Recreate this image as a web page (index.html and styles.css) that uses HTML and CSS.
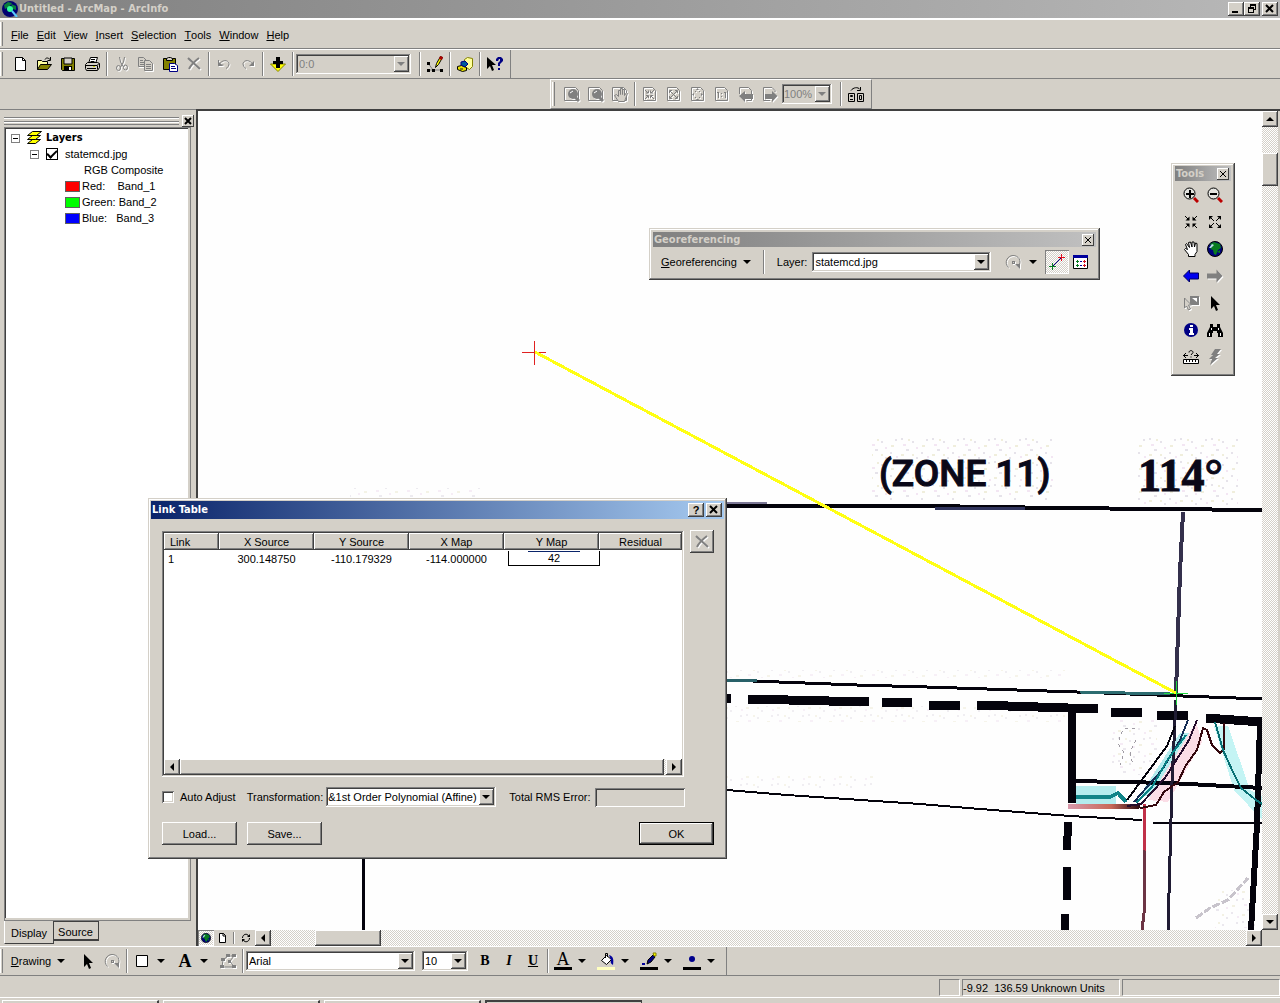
FILE: index.html
```html
<!DOCTYPE html>
<html lang="en">
<head>
  <meta charset="UTF-8" />
  <meta name="viewport" content="width=device-width, initial-scale=1.0"/>
  <title>Untitled - ArcMap - ArcInfo</title>
  <link rel="stylesheet" href="styles.css">
</head>
<body>

  <!-- icon set, 16x16 each -->
  <svg class="icon-defs" aria-hidden="true">
    <symbol id="i-new" viewBox="0 0 16 16"><path d="M3.5 1.5h7l3 3v10h-10z" fill="#fff" stroke="#000"/><path d="M10.500 1.500v3h3" fill="none" stroke="#000"/></symbol>
    <symbol id="i-open" viewBox="0 0 16 16"><path d="M1.500 13.500v-9h4l1 1h5v3" fill="#ffff9c" stroke="#000"/><path d="M1.500 13.500l3-5h11l-4 5z" fill="#848200" stroke="#000"/><path d="M9 3.500c1-2 3-2 5 0M14.500 1v3.500h-3" fill="none" stroke="#000"/></symbol>
    <symbol id="i-save" viewBox="0 0 16 16"><path d="M1.500 2.500h13v12h-12l-1-1z" fill="#848200" stroke="#000"/><path d="M4 2h8v6H4z" fill="#d4d0c8" stroke="#000"/><path d="M4 10h8v4H4z"/><path d="M9 11h2v3H9z" fill="#fff"/></symbol>
    <symbol id="i-print" viewBox="0 0 16 16"><path d="M4.500 7.500l2-6h7l-2 6z" fill="#fff" stroke="#000"/><path d="M7 3.500h4M6.500 5.500h4" stroke="#000"/><path d="M1.500 8.500l2-2h10l2 1v4l-2 3h-11l-1-2z" fill="#d4d0c8" stroke="#000"/><path d="M2 9.500h11l2-2M13.500 9.500v4M3 12.500h9" stroke="#000" fill="none"/><path d="M9 10h2v1H9z" fill="#cc0"/></symbol>
    <symbol id="i-cut" viewBox="0 0 16 16"><g fill="none" stroke="currentColor"><path d="M5.500 1l1 5 3 5M10.500 1l-1 5-3 5"/><ellipse cx="4.500" cy="12" rx="2" ry="2.500"/><ellipse cx="11.500" cy="11.500" rx="2" ry="2.500"/></g></symbol>
    <symbol id="i-copy" viewBox="0 0 16 16"><g fill="#d4d0c8" stroke="currentColor"><path d="M.5 1.500h5l3 3v6h-8z"/><path d="M2 4.500h3M2 6.500h5M2 8.500h5"/><path d="M6.500 4.500h5l3 3v7h-8z"/><path d="M8 8.500h5M8 10.500h5M8 12.500h5"/></g></symbol>
    <symbol id="i-paste" viewBox="0 0 16 16"><path d="M1.500 2.500h12v11h-12z" fill="#848200" stroke="#000"/><path d="M4.500 4.500v-2l2-1h2l2 1v2z" fill="#d4d0c8" stroke="#000"/><path d="M7.500 7.500h5l3 2v6h-8z" fill="#fff" stroke="#000084"/><path d="M9 10.500h4M9 12.500h5" stroke="#000084"/></symbol>
    <symbol id="i-x" viewBox="0 0 16 16"><path d="M2 2c3 3 8 7 12 11M13 2C9 5 5 9 3 13" fill="none" stroke="currentColor" stroke-width="2"/></symbol>
    <symbol id="i-undo" viewBox="0 0 16 16"><path d="M3 8.500c3-5 9-5 10-1 0 2-1 4-3 5M2.500 4v5h5" fill="none" stroke="currentColor"/><path d="M2 5v5h5z" fill="currentColor"/></symbol>
    <symbol id="i-redo" viewBox="0 0 16 16"><path d="M13 8.500c-3-5-9-5-10-1 0 2 1 4 3 5" fill="none" stroke="currentColor"/><path d="M14 5v5H9z" fill="currentColor"/></symbol>
    <symbol id="i-add" viewBox="0 0 16 16"><path d="M.5 8h15L8 15.500z" fill="#ff0" stroke="#848200"/><path d="M6 1h4v4h3v3h-3v4H6V8H3V5h3z"/></symbol>
    <symbol id="i-editor" viewBox="0 0 16 16"><path d="M1 7l5 7h9M2 14h5" fill="none" stroke="#808080"/><path d="M0 6h3v3H0zM0 13h3v3H0zM5 13h3v3H5zM13 13h3v3h-3z"/><path d="M8.500 11.500l1-4 4-7 2 1-4 7z" fill="#ff0" stroke="#000"/><path d="M13 0l3 1-1 3-3-1z" fill="#a00"/></symbol>
    <symbol id="i-toolbox" viewBox="0 0 16 16"><path d="M7.500 3.500l3-2 5 1v8l-3 3-5-3z" fill="#ffff9c" stroke="#848200"/><path d="M.5 10.500l4-1 5 2v3l-4 1-5-2z" fill="#e8e000" stroke="#000"/><path d="M4 6l4-1 3 3-3 3-4-2z" fill="#005a9c" stroke="#000084"/><path d="M3 12h3v2H3z" fill="#848200"/></symbol>
    <symbol id="i-help" viewBox="0 0 16 16"><path d="M0 1v12l3-3 2 5 2-1-2-5h4z"/><path d="M9 5V3l2-2h3l2 2v2l-3 3v2h-2V7l2-2V3h-1l-1 2zM11 12h2v2h-2z" fill="#000084"/></symbol>
    <symbol id="i-pzoom" viewBox="0 0 16 16"><path d="M.5 1.500h11l3 3v10H.5z" fill="none" stroke="currentColor"/><circle cx="9" cy="8" r="5" fill="currentColor"/><path d="M11 11l4 4" stroke="currentColor" stroke-width="3"/><path d="M6 7l3-2" stroke="#fff"/></symbol>
    <symbol id="i-phand" viewBox="0 0 16 16"><path d="M.5 1.500h11l3 3v10H.5z" fill="none" stroke="currentColor"/><path d="M6.500 15.500l-4-6 2-1 2 2v-6h2v4-6h2v6-5h2v6l2-3 1 1-3 8z" fill="#d4d0c8" stroke="currentColor"/></symbol>
    <symbol id="i-pin" viewBox="0 0 16 16"><g fill="none" stroke="currentColor"><path d="M1.500 1.500h9l3 3v10h-12z"/><path d="M3 4l3 3M4 7h2.500V4.500M12 4L9 7M11 7H8.500V4.500M3 13l3-3M4 9.500h2.500V12M12 13l-3-3M11 9.500H8.500V12"/></g></symbol>
    <symbol id="i-pout" viewBox="0 0 16 16"><g fill="none" stroke="currentColor"><path d="M1.500 1.500h9l3 3v10h-12z"/><path d="M3.500 7V4.500H6M4 5l7 7M11.500 7V4.500H9M11 5l-7 7M3.500 10v2.500H6M11.500 10v2.500H9"/></g></symbol>
    <symbol id="i-pfull" viewBox="0 0 16 16"><g fill="none" stroke="currentColor"><path d="M1.500 1.500h9l3 3v10h-12z"/><path d="M5 5.500h1M9 5.500h1M5 11.500h1M9 11.500h1"/></g><path d="M6 4l1.500-2L9 4zM6 13l1.500 2L9 13zM4 7L2 8.500 4 10zM11 7l2 1.500-2 1.500z" fill="currentColor"/></symbol>
    <symbol id="i-p11" viewBox="0 0 16 16"><path d="M1.500 1.500h9l3 3v10h-12z" fill="none" stroke="currentColor"/><path d="M3 6h2v6H4V7H3zM10 6h2v6h-1V7h-1zM7 7h1v1H7zM7 10h1v1H7z" fill="currentColor"/></symbol>
    <symbol id="i-pback" viewBox="0 0 16 16"><path d="M1.500 8V1.500h9l3 3v10h-5" fill="none" stroke="currentColor"/><path d="M1 10l6-5v3h8v5H7v3z" fill="currentColor"/></symbol>
    <symbol id="i-pnext" viewBox="0 0 16 16"><path d="M13 6V4.500l-3-3H1.500v13H8" fill="none" stroke="currentColor"/><path d="M15.500 10L10 5v3H3v5h7v3z" fill="currentColor"/></symbol>
    <symbol id="i-toggle" viewBox="0 0 16 16"><g fill="none" stroke="#000"><path d="M.5 7.500h6v8h-6zM9.500 7.500h6v8h-6zM2.500 9.500h2v1h-2zM2 13.500h3M11.500 9.500h2v4h-2z"/><path d="M3 4.500c2-3 7-4 9-1M12.500 1v3.500H9"/></g></symbol>
    <symbol id="i-layers" viewBox="0 0 16 16"><g fill="#ff0" stroke="#000"><path d="M1.500 13.500l5-4h8l-5 4z"/><path d="M1.500 9.500l5-4h8l-5 4z"/><path d="M1.500 5.500l5-4h9l-5 4z"/></g></symbol>
    <symbol id="i-zin" viewBox="0 0 16 16"><path d="M11 11l4 4" stroke="#b00" stroke-width="3"/><circle cx="6.500" cy="6.500" r="5.500" fill="#e4e4e0" stroke="#000"/><path d="M6 3h2v3h3v2H8v3H6V8H3V6h3z"/></symbol>
    <symbol id="i-zout" viewBox="0 0 16 16"><path d="M11 11l4 4" stroke="#b00" stroke-width="3"/><circle cx="6.500" cy="6.500" r="5.500" fill="#e4e4e0" stroke="#000"/><path d="M3 6h7v2H3z"/></symbol>
    <symbol id="i-fin" viewBox="0 0 16 16"><path d="M2 2l4 4M14 2l-4 4M2 14l4-4M14 14l-4-4" stroke="#000"/><path d="M6.500 2.500v4h-4zM9.500 2.500v4h4zM6.500 13.500v-4h-4zM9.500 13.500v-4h4z"/></symbol>
    <symbol id="i-fout" viewBox="0 0 16 16"><path d="M3 3l4 4M13 3L9 7M3 13l4-4M13 13L9 9" stroke="#000"/><path d="M2 2h4L2 6zM14 2h-4l4 4zM2 14h4l-4-4zM14 14h-4l4-4z"/></symbol>
    <symbol id="i-hand" viewBox="0 0 16 16"><path d="M5.500 15.500v-2l-4-5 1-1 2 1-2-5 1-1 3 4-1-5 2-.5 1.500 5v-5h2l.5 5 1-4 1.500.5v8l-2 3v2z" fill="#fff" stroke="#000"/></symbol>
    <symbol id="i-globe" viewBox="0 0 16 16"><circle cx="8" cy="8" r="7.500" fill="#00007c" stroke="#000"/><path d="M3 3l4-2 6 2 1 4-3 2-2 5-2-1-1-4-3-1 2-2z" fill="#087c20"/><path d="M2 7l3-4 2 1-3 3z" fill="#b8e0e8"/><path d="M10 11l3-2v3z" fill="#087c20"/></symbol>
    <symbol id="i-back" viewBox="0 0 16 16"><path d="M.5 8l6-6v3h9v6h-9v3z" fill="#00e" stroke="#000060"/></symbol>
    <symbol id="i-next" viewBox="0 0 16 16"><path d="M15.500 8l-6-6.500v4H0v5h9.500v4z" fill="currentColor"/></symbol>
    <symbol id="i-selfeat" viewBox="0 0 16 16"><path d="M7 1h9v9H7z" fill="currentColor"/><path d="M9 3h5v4z" fill="#fff"/><path d="M1.500 3v10l2-2 2 4 2-1-2-4h3z" fill="#d4d0c8" stroke="currentColor"/></symbol>
    <symbol id="i-arrow" viewBox="0 0 16 16"><path d="M4 1v13l3-3 2 5 2-1-2-5h4z"/></symbol>
    <symbol id="i-info" viewBox="0 0 16 16"><circle cx="8" cy="8" r="7" fill="#000084"/><path d="M7 3h3v2H7zM6 6h4v5h1v2H6v-2h1V8H6z" fill="#fff"/></symbol>
    <symbol id="i-find" viewBox="0 0 16 16"><path d="M3 2h3v3h4V2h3v3l3 6v4h-5v-4h-1V9H6v2H5v4H0v-4l3-6z"/><path d="M2 11h1v3H2zM13 11h1v3h-1zM4 6h1v2H4zM11 6h1v2h-1z" fill="#fff"/></symbol>
    <symbol id="i-measure" viewBox="0 0 16 16"><path d="M.5 10.500h15v4H.5z" fill="#fff" stroke="#000"/><path d="M3.500 11v2M6.500 11v2M9.500 11v2M12.500 11v2M0 6.500h5M11 6.500h5M3 4L.5 6.500 3 9M13 4l2.500 2.500L13 9M6 3.500C6 1 10 1 10 3.500L8 6M8 7.500v1" fill="none" stroke="#000"/></symbol>
    <symbol id="i-bolt" viewBox="0 0 16 16"><path d="M8 0h6l-4 5h3l-5 4h3L3 16l2-6H2l4-4H4z" fill="currentColor"/></symbol>
    <symbol id="i-rotate" viewBox="0 0 16 16"><path d="M3.500 13.500c-5-5-1-12 4.500-12s9 5 5.500 11" fill="none" stroke="currentColor"/><path d="M10 10h5v5zM7 7h3v3H7z" fill="currentColor"/><path d="M8 8h1v1H8z" fill="#d4d0c8"/></symbol>
    <symbol id="i-link" viewBox="0 0 16 16"><path d="M4 12l8-8" stroke="#000084"/><path d="M12 0h1v3h3v1h-3v3h-1V4H9V3h3z" fill="#e01020"/><path d="M3 9h1v3h3v1H4v3H3v-3H0v-1h3z" fill="#087c20"/></symbol>
    <symbol id="i-table" viewBox="0 0 16 16"><path d="M.5 2.500h14v12H.5z" fill="#fff" stroke="#000"/><path d="M0 1h15v3H0z" fill="#00009c"/><path d="M4.500 6v3M3 7.500h3M4.500 10v3M3 11.500h3" stroke="#087c20"/><path d="M11.500 6v3M10 7.500h3M11.500 10v3M10 11.500h3" stroke="#d01020"/><path d="M7 7.500h2M7 11.500h2" stroke="#00009c"/></symbol>
    <symbol id="i-rect" viewBox="0 0 16 16"><path d="M2.500 2.500h11v11h-11z" fill="#fff" stroke="#000"/></symbol>
    <symbol id="i-vertex" viewBox="0 0 16 16"><path d="M2 14l1-7 5-4h6l-4 5 4 6z" fill="none" stroke="currentColor"/><path d="M0 12h4v3H0zM1 5h4v3H1zM6 1h4v3H6zM12 1h4v3h-4zM8 7h3v3H8zM12 12h4v3h-4z" fill="currentColor"/></symbol>
    <symbol id="i-fill" viewBox="0 0 16 16"><path d="M3.500 8.500l5-5 5 4-5 5z" fill="#fff" stroke="#000"/><path d="M7.500 6V1.500h2V5" fill="none" stroke="#000"/><path d="M11 3c4 1 5 4 4 10-2-1-3-3-2-5z" fill="#00009c"/></symbol>
    <symbol id="i-pen" viewBox="0 0 16 16"><path d="M6 12l1-4 5-5 2 2-4 5z" fill="#000084" stroke="#000"/><path d="M12 1h3v3h-2z" fill="#ff0" stroke="#848200"/><path d="M1 11h3v2H1z" fill="#00009c"/></symbol>
    <symbol id="i-dot" viewBox="0 0 16 16"><circle cx="8" cy="7" r="3" fill="#00008c"/></symbol>
    <symbol id="i-page" viewBox="0 0 16 16"><path d="M5.500 3.500h4l2 2v7h-6z" fill="#fff" stroke="#000"/><path d="M9 3v3h3" fill="none" stroke="#000"/></symbol>
    <symbol id="i-refresh" viewBox="0 0 16 16"><path d="M4.500 8c0-4 5-5 6-2M11.500 8c0 4-5 5-6 2" fill="none" stroke="#000"/><path d="M12 4v3H9zM4 12V9h3z"/></symbol>
    <symbol id="i-app" viewBox="0 0 16 16"><circle cx="8" cy="8" r="8" fill="#000070"/><path d="M2 4l4-3 4 1-3 4-4 2zM9 3l5 2v4l-3-1z" fill="#0a7c3c"/><circle cx="8" cy="8" r="3" fill="#30ff98"/><path d="M10 10l5 6" stroke="#5ac8ff" stroke-width="2"/></symbol>
  </svg>

  <header class="title-bar">
    <svg class="icon"><use href="#i-app"/></svg>
    <h1>Untitled - ArcMap - ArcInfo</h1>
    <div class="window-buttons">
      <button type="button" aria-label="Minimize"><svg viewBox="0 0 12 10"><path d="M2 7h6v2H2z"/></svg></button>
      <button type="button" aria-label="Restore"><svg viewBox="0 0 12 10"><path d="M4 0h6v6H8V5h1V2H5v1H4zM2 3h6v6H2zM3 5v3h4V5z" fill-rule="evenodd"/></svg></button>
      <button type="button" class="close" aria-label="Close"><svg viewBox="0 0 12 10"><path d="M2 1l7 7M9 1L2 8" stroke="#000" stroke-width="2"/></svg></button>
    </div>
  </header>

  <nav class="menu-bar">
    <span class="grip"></span>
    <button type="button"><u>F</u>ile</button>
    <button type="button"><u>E</u>dit</button>
    <button type="button"><u>V</u>iew</button>
    <button type="button"><u>I</u>nsert</button>
    <button type="button"><u>S</u>election</button>
    <button type="button"><u>T</u>ools</button>
    <button type="button"><u>W</u>indow</button>
    <button type="button"><u>H</u>elp</button>
  </nav>

  <div class="dock-row">
    <div class="toolbar">
      <span class="grip"></span>
      <button type="button" aria-label="New"><svg class="icon"><use href="#i-new"/></svg></button>
      <button type="button" aria-label="Open"><svg class="icon"><use href="#i-open"/></svg></button>
      <button type="button" aria-label="Save"><svg class="icon"><use href="#i-save"/></svg></button>
      <button type="button" aria-label="Print"><svg class="icon"><use href="#i-print"/></svg></button>
      <span class="sep"></span>
      <button type="button" disabled aria-label="Cut"><svg class="icon"><use href="#i-cut"/></svg></button>
      <button type="button" disabled aria-label="Copy"><svg class="icon"><use href="#i-copy"/></svg></button>
      <button type="button" aria-label="Paste"><svg class="icon"><use href="#i-paste"/></svg></button>
      <button type="button" disabled aria-label="Delete"><svg class="icon"><use href="#i-x"/></svg></button>
      <span class="sep"></span>
      <button type="button" disabled aria-label="Undo"><svg class="icon"><use href="#i-undo"/></svg></button>
      <button type="button" disabled aria-label="Redo"><svg class="icon"><use href="#i-redo"/></svg></button>
      <span class="sep"></span>
      <button type="button" aria-label="Add data"><svg class="icon"><use href="#i-add"/></svg></button>
      <span class="sep"></span>
      <span class="combo combo-scale off"><select disabled aria-label="Map scale"><option>0:0</option></select></span>
      <span class="sep"></span>
      <button type="button" aria-label="Editor toolbar"><svg class="icon"><use href="#i-editor"/></svg></button>
      <span class="sep"></span>
      <button type="button" aria-label="Toolbox"><svg class="icon"><use href="#i-toolbox"/></svg></button>
      <span class="sep"></span>
      <button type="button" aria-label="What's this?"><svg class="icon"><use href="#i-help"/></svg></button>
    </div>
  </div>

  <div class="dock-row layout-row">
    <div class="toolbar">
      <span class="grip"></span>
      <button type="button" disabled aria-label="Zoom in page"><svg class="icon"><use href="#i-pzoom"/></svg></button>
      <button type="button" disabled aria-label="Zoom out page"><svg class="icon"><use href="#i-pzoom"/></svg></button>
      <button type="button" disabled aria-label="Pan page"><svg class="icon"><use href="#i-phand"/></svg></button>
      <span class="sep"></span>
      <button type="button" disabled aria-label="Fixed zoom in page"><svg class="icon"><use href="#i-pin"/></svg></button>
      <button type="button" disabled aria-label="Fixed zoom out page"><svg class="icon"><use href="#i-pout"/></svg></button>
      <button type="button" disabled aria-label="Whole page"><svg class="icon"><use href="#i-pfull"/></svg></button>
      <button type="button" disabled aria-label="Zoom to 100%"><svg class="icon"><use href="#i-p11"/></svg></button>
      <button type="button" disabled aria-label="Previous extent"><svg class="icon"><use href="#i-pback"/></svg></button>
      <button type="button" disabled aria-label="Next extent"><svg class="icon"><use href="#i-pnext"/></svg></button>
      <span class="combo combo-zoom off"><select disabled aria-label="Page zoom"><option>100%</option></select></span>
      <span class="sep"></span>
      <button type="button" aria-label="Toggle draft mode"><svg class="icon"><use href="#i-toggle"/></svg></button>
    </div>
  </div>

  <main class="workspace">
    <aside class="contents">
      <div class="contents-grip">
        <span class="lines"></span>
        <button type="button" class="close-small" aria-label="Close table of contents"><svg viewBox="0 0 8 8"><path d="M1 1l6 6M7 1L1 7" stroke="#000" stroke-width="2"/></svg></button>
      </div>
      <ul class="tree">
        <li class="level-1"><span class="expander"></span><svg class="icon"><use href="#i-layers"/></svg><b>Layers</b></li>
        <li class="level-2"><span class="expander"></span><input type="checkbox" id="layer" checked><label for="layer">statemcd.jpg</label></li>
        <li class="level-4">RGB Composite</li>
        <li class="level-3"><span class="swatch red"></span>Red:    Band_1</li>
        <li class="level-3"><span class="swatch green"></span>Green: Band_2</li>
        <li class="level-3"><span class="swatch blue"></span>Blue:   Band_3</li>
      </ul>
      <div class="tabs">
        <button type="button" class="active">Display</button>
        <button type="button">Source</button>
      </div>
    </aside>

    <section class="map-pane">
      <svg class="map" viewBox="198 111 1064 819" preserveAspectRatio="xMinYMin slice" role="img" aria-label="Scanned state map">
        <defs>
          <pattern id="speckle" width="31" height="23" patternUnits="userSpaceOnUse">
            <path d="M2 1h2v2H2zM13 4h2v2h-2zM7 12h3v2H7zM22 15h2v2h-2zM27 2h2v2h-2zM17 20h2v2h-2z" fill="#e6e3ea"/>
            <path d="M9 2h2v2H9zM23 8h3v2h-3zM2 17h3v2H2zM13 17h2v2h-2z" fill="#f0eedc"/>
            <path d="M4 7h3v2H4zM17 10h2v2h-2zM28 19h2v2h-2z" fill="#f3e6f3"/>
          </pattern>
          <linearGradient id="red-road" gradientUnits="userSpaceOnUse" x1="1068" y1="0" x2="1140" y2="0"><stop offset="0" stop-color="#d89aac"/><stop offset=".6" stop-color="#c86858"/><stop offset="1" stop-color="#280810"/></linearGradient>
        </defs>
        <g fill="url(#speckle)">
          <path d="M872 436h182v64H872zM1136 436h102v70h-102z"/>
          <path d="M727 670h340v8H727zM727 706h340v16H727zM727 776h150v12H727z" opacity=".6"/>
          <path d="M1112 720h45v55h-45zM1215 890h40v38h-40z" opacity=".8"/>
          <path d="M350 488h130v10H350z" opacity=".7"/>
        </g>
        <path d="M1214 726l14 0 22 64 12 6v24l-28-30z" fill="#c4f4f4"/>
        <path d="M1076 786h40v18h-40zM1140 795l40-62 12 0-34 66z" fill="#b4ecee"/>
        <path d="M1196 722l-48 78 20 2 34-60z" fill="#fbdde6"/>
        <text class="zone" x="879" y="486">(ZONE 11)</text>
        <text class="degree" x="1138" y="491">114°</text>

        <g class="ink" fill="none" stroke="#04030c">
          <path d="M727 503.500h40" stroke="#7c7896" stroke-width="3"/>
          <path d="M727 506h200l130 2 205 2" stroke-width="4"/>
          <path d="M935 508h90" stroke="#30345c" stroke-width="3"/>
          <path d="M1183 512l-3 60-3 90-1 31" stroke="#34304c" stroke-width="4"/>
          <path d="M727 680l130 5 70 2 150 5 185 7" stroke-width="3"/>
          <path d="M727 680h30" stroke="#286068" stroke-width="3"/>
          <path d="M1080 692l90 2" stroke="#2c6c70" stroke-width="3"/>
          <path d="M727 698h4M748 699l121 3M882 702h30M929 705h31M977 705l121 4M1111 712h31M1157 715h31M1206 718l56 4" stroke-width="9"/>
          <path d="M1072 708v95" stroke-width="8"/>
          <path d="M1068 822l-1 28M1067 867v33M1065 914v16" stroke-width="8"/>
          <path d="M363.500 855v75" stroke-width="3"/>
          <path d="M1072 781l98 2 92 5" stroke-width="4"/>
          <path d="M1076 797h34l8-4 8 9" stroke="#108488" stroke-width="4"/>
          <path d="M1068 807l72-1" stroke="url(#red-road)" stroke-width="5"/>
          <path d="M727 790l60 5 133 9 60 5 90 7 72 4M1153 823h109" stroke-width="2"/>
          <path d="M1176 700l-4 82-4 148" stroke="#201c34" stroke-width="3"/>
          <path d="M1144 804v20l1 30" stroke="#c03048" stroke-width="3"/>
          <path d="M1144 850l1 55-3 25" stroke="#6c3444" stroke-width="3"/>
          <path d="M1260 724l-3 100-6 106" stroke-width="6"/>
          <path d="M1175 726l-8 20-40 54" stroke-width="2"/>
          <path d="M1188 720l-8 20-18 30-28 32" stroke="#142c54" stroke-width="2"/>
          <path d="M1186 735l-18 24-16 28-16 16" stroke="#088084" stroke-width="2"/>
          <path d="M1197 720l-8 20-24 38-24 26-14 2" stroke="#240c2c" stroke-width="2"/>
          <path d="M1140 808l16-3 8-13 14-10 8-17 11-15 6-22 4 2 5 15 8 8 4-4v-26" stroke="#34080e" stroke-width="2"/>
          <path d="M1215 722l8 28 10 22 8 16 15 12 6 4" stroke="#087074" stroke-width="2"/>
          <path d="M1135 728l-12 1-5 14 6 10-4 12M1136 740l-6 12 3 13" stroke="#a09ca4" stroke-dasharray="3 4"/>
          <path d="M1196 918l14-10 18-8 20-22" stroke="#c8c4cc" stroke-width="3" stroke-dasharray="8 2"/>
        </g>
        <!-- control point link -->
        <path d="M1164 693h24M1176 681v24" stroke="#20d840"/>
        <path d="M522 352.500h24M534.500 341v24" stroke="#e02020"/>
        <path d="M535 352l641 341" stroke="#ffff14" stroke-width="3"/>
      </svg>

      <div class="scroll vertical">
        <button type="button" aria-label="Scroll up"><i class="tri up"></i></button>
        <span class="thumb"></span>
        <button type="button" aria-label="Scroll down"><i class="tri down"></i></button>
      </div>

      <div class="scroll horizontal">
        <div class="view-buttons">
          <button type="button" class="pressed" aria-label="Data view"><svg class="icon-mini"><use href="#i-globe"/></svg></button>
          <button type="button" aria-label="Layout view"><svg class="icon"><use href="#i-page"/></svg></button>
          <span class="sep"></span>
          <button type="button" aria-label="Refresh view"><svg class="icon"><use href="#i-refresh"/></svg></button>
        </div>
        <button type="button" aria-label="Scroll left"><i class="tri left"></i></button>
        <span class="thumb"></span>
        <button type="button" aria-label="Scroll right"><i class="tri right"></i></button>
      </div>
    </section>

    <section class="window tools-window">
      <div class="caption">
        <h2>Tools</h2>
        <button type="button" class="close-small" aria-label="Close tools"><svg viewBox="0 0 8 8"><path d="M1 1l6 6M7 1L1 7" stroke="#000"/></svg></button>
      </div>
      <div class="tool-grid">
        <button type="button" aria-label="Zoom in"><svg class="icon"><use href="#i-zin"/></svg></button>
        <button type="button" aria-label="Zoom out"><svg class="icon"><use href="#i-zout"/></svg></button>
        <button type="button" aria-label="Fixed zoom in"><svg class="icon"><use href="#i-fin"/></svg></button>
        <button type="button" aria-label="Fixed zoom out"><svg class="icon"><use href="#i-fout"/></svg></button>
        <button type="button" aria-label="Pan"><svg class="icon"><use href="#i-hand"/></svg></button>
        <button type="button" aria-label="Full extent"><svg class="icon"><use href="#i-globe"/></svg></button>
        <button type="button" aria-label="Back"><svg class="icon"><use href="#i-back"/></svg></button>
        <button type="button" disabled aria-label="Forward"><svg class="icon"><use href="#i-next"/></svg></button>
        <button type="button" disabled aria-label="Select features"><svg class="icon"><use href="#i-selfeat"/></svg></button>
        <button type="button" aria-label="Select elements"><svg class="icon"><use href="#i-arrow"/></svg></button>
        <button type="button" aria-label="Identify"><svg class="icon"><use href="#i-info"/></svg></button>
        <button type="button" aria-label="Find"><svg class="icon"><use href="#i-find"/></svg></button>
        <button type="button" aria-label="Measure"><svg class="icon"><use href="#i-measure"/></svg></button>
        <button type="button" disabled aria-label="Hyperlink"><svg class="icon"><use href="#i-bolt"/></svg></button>
      </div>
    </section>

    <section class="window georef-window">
      <div class="caption">
        <h2>Georeferencing</h2>
        <button type="button" class="close-small" aria-label="Close georeferencing"><svg viewBox="0 0 8 8"><path d="M1 1l6 6M7 1L1 7" stroke="#000"/></svg></button>
      </div>
      <div class="georef-bar">
        <button type="button" class="menu-button"><span><u>G</u>eoreferencing</span><i class="tri down"></i></button>
        <span class="sep"></span>
        <label for="georef-layer">Layer:</label>
        <span class="combo combo-layer"><select id="georef-layer"><option>statemcd.jpg</option></select></span>
        <button type="button" class="tool off" aria-label="Rotate"><svg class="icon"><use href="#i-rotate"/></svg></button>
        <button type="button" class="drop" aria-label="Rotate options"><i class="tri down"></i></button>
        <button type="button" class="tool pressed" aria-label="Add control points"><svg class="icon"><use href="#i-link"/></svg></button>
        <button type="button" class="tool" aria-label="View link table"><svg class="icon"><use href="#i-table"/></svg></button>
      </div>
    </section>

    <section class="window link-window">
      <div class="caption active">
        <h2>Link Table</h2>
        <div class="window-buttons">
          <button type="button" aria-label="Help"><b>?</b></button>
          <button type="button" class="close" aria-label="Close"><svg viewBox="0 0 12 10"><path d="M2 1l7 7M9 1L2 8" stroke="#000" stroke-width="2"/></svg></button>
        </div>
      </div>
      <div class="link-body">
        <div class="link-top">
          <div class="list">
            <table>
              <thead>
                <tr><th>Link</th><th>X Source</th><th>Y Source</th><th>X Map</th><th>Y Map</th><th>Residual</th></tr>
              </thead>
              <tbody>
                <tr><td>1</td><td>300.148750</td><td>-110.179329</td><td>-114.000000</td><td><input type="text" value="42" aria-label="Y Map value"></td><td></td></tr>
              </tbody>
            </table>
            <div class="scroll list-scroll">
              <button type="button" aria-label="Scroll left"><i class="tri left"></i></button>
              <span class="thumb"></span>
              <button type="button" aria-label="Scroll right"><i class="tri right"></i></button>
            </div>
          </div>
          <button type="button" class="push delete" aria-label="Delete link"><svg class="icon"><use href="#i-x"/></svg></button>
        </div>
        <div class="link-options">
          <input type="checkbox" id="auto"><label for="auto">Auto Adjust</label>
          <label for="transform" class="transform-label">Transformation:</label>
          <span class="combo combo-transform"><select id="transform"><option>&amp;1st Order Polynomial (Affine)</option></select></span>
          <label for="rms" class="rms-label">Total RMS Error:</label>
          <input type="text" id="rms" class="rms" readonly>
        </div>
        <div class="link-actions">
          <button type="button" class="push">Load...</button>
          <button type="button" class="push">Save...</button>
          <button type="button" class="push default">OK</button>
        </div>
      </div>
    </section>
  </main>

  <div class="dock-row draw-row">
    <div class="toolbar">
      <span class="grip"></span>
      <button type="button" class="menu-button"><span><u>D</u>rawing</span><i class="tri down"></i></button>
      <button type="button" aria-label="Select elements"><svg class="icon"><use href="#i-arrow"/></svg></button>
      <button type="button" disabled aria-label="Rotate"><svg class="icon"><use href="#i-rotate"/></svg></button>
      <span class="sep"></span>
      <button type="button" aria-label="Rectangle"><svg class="icon"><use href="#i-rect"/></svg></button>
      <button type="button" class="drop" aria-label="Shapes"><i class="tri down"></i></button>
      <button type="button" class="letter big" aria-label="Text"><b>A</b></button>
      <button type="button" class="drop" aria-label="Text tools"><i class="tri down"></i></button>
      <button type="button" disabled aria-label="Edit vertices"><svg class="icon"><use href="#i-vertex"/></svg></button>
      <span class="sep"></span>
      <span class="combo combo-font"><select aria-label="Font"><option>Arial</option></select></span>
      <span class="combo combo-size"><select aria-label="Font size"><option>10</option></select></span>
      <button type="button" class="letter" aria-label="Bold"><b>B</b></button>
      <button type="button" class="letter" aria-label="Italic"><b><em>I</em></b></button>
      <button type="button" class="letter" aria-label="Underline"><b><u>U</u></b></button>
      <span class="sep"></span>
      <button type="button" class="letter big ink-bar" aria-label="Font color">A</button>
      <button type="button" class="drop" aria-label="Font colors"><i class="tri down"></i></button>
      <button type="button" class="ink-bar cream" aria-label="Fill color"><svg class="icon"><use href="#i-fill"/></svg></button>
      <button type="button" class="drop" aria-label="Fill colors"><i class="tri down"></i></button>
      <button type="button" class="ink-bar" aria-label="Line color"><svg class="icon"><use href="#i-pen"/></svg></button>
      <button type="button" class="drop" aria-label="Line colors"><i class="tri down"></i></button>
      <button type="button" class="ink-bar" aria-label="Marker color"><svg class="icon"><use href="#i-dot"/></svg></button>
      <button type="button" class="drop" aria-label="Marker colors"><i class="tri down"></i></button>
    </div>
  </div>

  <footer class="status-bar">
    <span class="cell small"></span>
    <span class="cell coords">-9.92  136.59 Unknown Units</span>
    <span class="cell coords"></span>
  </footer>
  <div class="task-strip">
    <span></span><span></span><span></span><span class="current"></span>
  </div>

</body>
</html>
```
FILE: styles.css
```css
* {
  box-sizing: border-box;
}

body {
  margin: 0;
  min-height: 100vh;
  display: flex;
  flex-direction: column;
  background: #d4d0c8;
  color: #000;
  font-family: "Liberation Sans", Arial, sans-serif;
  font-size: 11px;
  line-height: 16px;
}

button,
input,
select {
  font: inherit;
  color: inherit;
  margin: 0;
  padding: 0;
  border: 0;
  border-radius: 0;
  background: none;
}

button {
  display: flex;
  align-items: center;
  justify-content: center;
}

h1,
h2 {
  margin: 0;
  font-family: "DejaVu Sans Condensed", "DejaVu Sans", sans-serif;
  font-size: 11px;
  font-weight: bold;
}

.icon-defs {
  display: none;
}

.icon {
  width: 16px;
  height: 16px;
  flex: none;
}

.icon-mini {
  width: 10px;
  height: 10px;
}

/* title bar */
.title-bar {
  display: flex;
  align-items: center;
  gap: 1px;
  height: 18px;
  padding: 0 2px;
  background: linear-gradient(90deg, #808080, #b8b8b8);
  color: #d4d0c8;
}

.title-bar h1 {
  flex: 1;
}

.window-buttons {
  display: flex;
}

.window-buttons button {
  width: 16px;
  height: 14px;
  background: #d4d0c8;
  box-shadow: inset -1px -1px #404040, inset 1px 1px #fff, inset -2px -2px #808080;
  color: #000;
}

.window-buttons svg {
  width: 12px;
  height: 10px;
}

.window-buttons .close {
  margin-left: 2px;
}

/* docked bars */
.menu-bar,
.dock-row {
  display: flex;
  height: 30px;
  border-top: 1px solid #fff;
  border-bottom: 1px solid #808080;
}

.menu-bar {
  height: 31px;
  align-items: center;
  gap: 8px;
  border-top-width: 2px;
}

.menu-bar button {
  padding-top: 2px;
}

.grip {
  align-self: stretch;
  width: 3px;
  margin: 2px 5px 2px 0;
  border-right: 1px solid #808080;
  border-left: 1px solid #fff;
}

.menu-bar .grip {
  margin-right: 0;
}

.toolbar {
  display: flex;
  align-items: center;
  padding-right: 3px;
  border-right: 1px solid #808080;
}

.toolbar > button,
.tool-grid button {
  width: 24px;
  height: 24px;
}

.sep {
  width: 2px;
  height: 24px;
  margin: 0 2px;
  border-left: 1px solid #808080;
  border-right: 1px solid #fff;
}

.off .icon,
button:disabled .icon,
.delete .icon {
  color: #808080;
  filter: drop-shadow(1px 1px 0 #fff);
}

.layout-row {
  padding-left: 550px;
  border-top: 0;
  border-bottom: 0;
}

.layout-row .toolbar {
  border: 1px solid #808080;
  border-top-color: #fff;
  border-left-color: #fff;
}

.layout-row .grip {
  margin-left: 1px;
}

/* triangles */
.tri {
  width: 0;
  height: 0;
  border: 4px solid transparent;
}

.tri.down {
  border-top-color: #000;
  border-bottom-width: 0;
}

.tri.up {
  border-bottom-color: #000;
  border-top-width: 0;
}

.tri.left {
  border-right-color: #000;
  border-left-width: 0;
}

.tri.right {
  border-left-color: #000;
  border-right-width: 0;
}

/* combo boxes */
.combo {
  position: relative;
  display: flex;
  height: 20px;
  padding: 2px;
  background: #fff;
  box-shadow: inset -1px -1px #fff, inset 1px 1px #808080, inset -2px -2px #d4d0c8, inset 2px 2px #404040;
}

.combo select {
  appearance: none;
  width: 100%;
  padding: 0 15px 0 1px;
  outline: 0;
}

.combo::before {
  content: "";
  position: absolute;
  top: 2px;
  right: 2px;
  bottom: 2px;
  width: 15px;
  background: #d4d0c8;
  box-shadow: inset -1px -1px #404040, inset 1px 1px #fff, inset -2px -2px #808080;
  pointer-events: none;
}

.combo::after {
  content: "";
  position: absolute;
  top: 8px;
  right: 6px;
  border: 4px solid transparent;
  border-top-color: #000;
  border-bottom-width: 0;
  pointer-events: none;
}

.combo.off {
  background: #d4d0c8;
}

.combo.off select {
  color: #808080;
  opacity: 1;
}

.combo.off::after {
  border-top-color: #808080;
}

.combo-scale {
  width: 115px;
  margin-right: 6px;
}

.combo-zoom {
  width: 50px;
  margin-right: 6px;
}

.combo-zoom select,
.combo-transform select {
  padding-left: 0;
}

/* workspace */
.workspace {
  position: relative;
  flex: 1;
  display: flex;
  min-height: 760px;
}

.contents {
  display: flex;
  flex-direction: column;
  width: 196px;
  padding: 4px 5px 0 4px;
  border-top: 1px solid #808080;
}

.contents-grip {
  display: flex;
  align-items: center;
  gap: 3px;
  height: 13px;
  margin-right: -3px;
}

.lines {
  flex: 1;
  height: 8px;
  border: solid #808080;
  border-width: 1px 0;
  background: linear-gradient(#fff 1px, transparent 1px 3px, #808080 3px 4px, #fff 4px 5px, transparent 5px);
}

.close-small {
  width: 12px;
  height: 12px;
  background: #d4d0c8;
  box-shadow: inset -1px -1px #404040, inset 1px 1px #fff;
}

.close-small svg {
  width: 8px;
  height: 8px;
}

.tree {
  flex: 1;
  margin: 0;
  padding: 2px 4px;
  list-style: none;
  background: #fff;
  border: 1px solid #808080;
  box-shadow: inset -2px -2px #d4d0c8, inset 1px 1px #404040;
}

.tree li {
  display: flex;
  align-items: center;
  height: 16px;
  white-space: pre;
}

.tree b {
  margin-left: 4px;
  font-family: "DejaVu Sans Condensed", "DejaVu Sans", sans-serif;
}

.tree .icon {
  margin-left: 6px;
}

.level-1 {
  padding-left: 2px;
}

.level-2 {
  padding-left: 21px;
}

.level-3 {
  padding-left: 56px;
}

.level-4 {
  padding-left: 75px;
}

.expander {
  width: 9px;
  height: 9px;
  border: 1px solid #808080;
  background: linear-gradient(#000, #000) center / 5px 1px no-repeat;
}

input[type="checkbox"] {
  appearance: none;
  width: 12px;
  height: 12px;
  background: #fff;
  box-shadow: inset 1px 1px #808080, inset -1px -1px #fff, inset 2px 2px #404040, inset -2px -2px #d4d0c8;
}

.tree input[type="checkbox"] {
  display: grid;
  place-items: center;
  margin: 0 7px;
  border: 1px solid #000;
  box-shadow: none;
}

.tree input:checked::before {
  content: "";
  width: 8px;
  height: 4px;
  margin-bottom: 2px;
  border-left: 2px solid #000;
  border-bottom: 2px solid #000;
  transform: rotate(-45deg);
}

.swatch {
  width: 15px;
  height: 11px;
  margin-right: 2px;
  border: 1px solid #606060;
}

.red {
  background: #f00;
}

.green {
  background: #0f0;
}

.blue {
  background: #00f;
}

.tabs {
  display: flex;
  align-items: flex-start;
  height: 25px;
}

.tabs button {
  height: 20px;
  padding: 2px 5px 0 4px;
  border: solid #404040;
  border-width: 1px 1px 2px 0;
}

.tabs .active {
  height: 23px;
  padding: 2px 6px 0;
  border-width: 0 1px 1px 1px;
  border-left-color: #fff;
}

.map-pane {
  flex: 1;
  min-width: 0;
  display: grid;
  grid-template-columns: minmax(0, 1fr) 16px;
  grid-template-rows: minmax(0, 1fr) 16px;
  padding-right: 2px;
  border: solid #404040;
  border-width: 2px 0 0 2px;
}

.map {
  width: 100%;
  height: 100%;
  min-height: 0;
  background: #fefefe;
  shape-rendering: crispEdges;
}

.zone {
  font: 500 37px Roboto, sans-serif;
  fill: #0a0818;
  stroke: #0a0818;
}

.degree {
  font: bold 46px "Liberation Serif", serif;
  fill: #0a0818;
  stroke: #0a0818;
}

/* scroll bars */
.scroll {
  display: flex;
  background: repeating-conic-gradient(#fff 0 25%, #d4d0c8 0 50%) 0 0 / 2px 2px;
}

.scroll > button,
.thumb {
  width: 16px;
  height: 16px;
  background: #d4d0c8;
  box-shadow: inset -1px -1px #404040, inset 1px 1px #fff, inset -2px -2px #808080;
}

.vertical {
  flex-direction: column;
}

.vertical .thumb {
  height: 33px;
  margin: 26px 0 auto;
}

.horizontal .thumb {
  width: 66px;
  margin: 0 auto 0 44px;
}

.view-buttons {
  display: flex;
  align-items: center;
  width: 57px;
  background: #d4d0c8;
}

.view-buttons button {
  width: 16px;
  height: 16px;
}

.view-buttons .sep {
  height: 12px;
  margin: 0 3px;
}

.pressed {
  background: repeating-conic-gradient(#fff 0 25%, #d4d0c8 0 50%) 0 0 / 2px 2px;
  box-shadow: inset 1px 1px #808080, inset -1px -1px #fff;
}

/* floating windows */
.window {
  position: absolute;
  padding: 3px;
  background: #d4d0c8;
  box-shadow: inset -1px -1px #404040, inset 1px 1px #d4d0c8, inset -2px -2px #808080, inset 2px 2px #fff;
}

.caption {
  display: flex;
  align-items: center;
  justify-content: space-between;
  height: 15px;
  padding: 0 2px 0 1px;
  background: linear-gradient(90deg, #808080, #c0c0c0);
  color: #d4d0c8;
}

.caption.active {
  height: 18px;
  background: linear-gradient(90deg, #0a246a, #a6caf0);
  color: #fff;
}

.tools-window {
  top: 54px;
  right: 45px;
  width: 64px;
  padding: 3px 4px;
}

.tool-grid {
  display: grid;
  grid-template-columns: 24px 24px;
  row-gap: 3px;
  justify-content: center;
  padding: 2px 0 4px;
}

.georef-window {
  top: 119px;
  left: 649px;
  width: 451px;
  padding: 4px;
}

.georef-bar {
  display: flex;
  align-items: center;
  height: 29px;
  padding-left: 8px;
}

.menu-button {
  gap: 6px;
}

.georef-bar .sep {
  margin: 0 12px;
}

.combo-layer {
  width: 179px;
  margin: 0 10px 0 5px;
}

.tool {
  width: 24px;
  height: 24px;
}

.drop {
  width: 16px;
  height: 24px;
}

.georef-bar .pressed {
  margin-left: 4px;
}

.link-window {
  top: 389px;
  left: 148px;
  width: 579px;
}

.link-body {
  padding: 11px 10px 11px 11px;
}

.link-top {
  display: flex;
  align-items: flex-start;
  gap: 6px;
}

.list {
  flex: 1;
  display: flex;
  flex-direction: column;
  height: 246px;
  padding: 2px;
  margin-top: 1px;
  background: #fff;
  box-shadow: inset -1px -1px #fff, inset 1px 1px #808080, inset -2px -2px #d4d0c8, inset 2px 2px #404040;
}

table {
  width: 100%;
  table-layout: fixed;
  border-collapse: separate;
  border-spacing: 0;
}

th {
  width: 95px;
  height: 17px;
  padding: 0;
  font-weight: normal;
  background: #d4d0c8;
  box-shadow: inset -1px -1px #404040, inset 1px 1px #fff, inset -2px -2px #808080;
}

th:first-child {
  width: 55px;
  padding-left: 6px;
  text-align: left;
}

th:last-child {
  width: auto;
}

td {
  height: 17px;
  padding: 0;
  text-align: center;
}

td:first-child {
  padding-left: 4px;
  text-align: left;
}

td input {
  display: block;
  width: 92px;
  height: 15px;
  margin-left: 4px;
  text-align: center;
  border: 1px solid #000;
  border-top: 0;
  background: linear-gradient(#0a246a, #0a246a) center top / 52px 1px no-repeat;
}

.list-scroll {
  margin-top: auto;
}

.list-scroll .thumb {
  flex: 1;
  margin-right: 2px;
}

.push {
  width: 75px;
  height: 23px;
  background: #d4d0c8;
  box-shadow: inset -1px -1px #404040, inset 1px 1px #fff, inset -2px -2px #808080;
}

.push.delete {
  width: 24px;
}

.link-options {
  display: flex;
  align-items: center;
  height: 20px;
  margin-top: 10px;
}

.link-options input[type="checkbox"] {
  margin-right: 6px;
}

.transform-label {
  margin-left: 11px;
}

.combo-transform {
  width: 170px;
  margin-left: 3px;
}

.rms-label {
  margin-left: 13px;
}

.rms {
  width: 90px;
  height: 19px;
  margin-left: 4px;
  box-shadow: inset 1px 1px #808080, inset -1px -1px #fff, inset 2px 2px #404040;
}

.link-actions {
  display: flex;
  gap: 10px;
  margin-top: 15px;
}

.push.default {
  margin-left: auto;
  border: 1px solid #000;
}

/* drawing toolbar */
.draw-row .menu-button {
  width: 60px;
  margin-right: 8px;
}

.toolbar > .drop {
  width: 14px;
  margin-right: 5px;
}

.toolbar > .letter {
  font: 14px "Liberation Serif", serif;
}

.toolbar > .big {
  font-size: 18px;
}

.combo-font {
  width: 169px;
  margin-right: 7px;
}

.combo-size {
  width: 46px;
  margin-right: 5px;
}

.ink-bar {
  border-bottom: 3px solid #000;
}

.toolbar > .ink-bar {
  width: 18px;
  height: 18px;
  margin: 0 3px;
}

.ink-bar.cream {
  border-bottom-color: #ffffbf;
}

/* status bar */
.status-bar {
  display: flex;
  justify-content: flex-end;
  gap: 2px;
  height: 21px;
  padding: 3px 0 1px;
}

.cell {
  height: 17px;
  white-space: pre;
  border: 1px solid #808080;
  border-right-color: #fff;
  border-bottom-color: #fff;
}

.cell.small {
  width: 21px;
}

.cell.coords {
  width: 158px;
}

.task-strip {
  display: flex;
  gap: 4px;
  height: 6px;
  padding: 2px 2px 0;
  border-top: 1px solid #fff;
}

.task-strip span {
  width: 157px;
  border: 1px solid #fff;
  border-right: 2px solid #404040;
  border-bottom: 0;
}

.task-strip .current {
  border: solid #404040;
  border-width: 2px 1px 0 2px;
}
```
